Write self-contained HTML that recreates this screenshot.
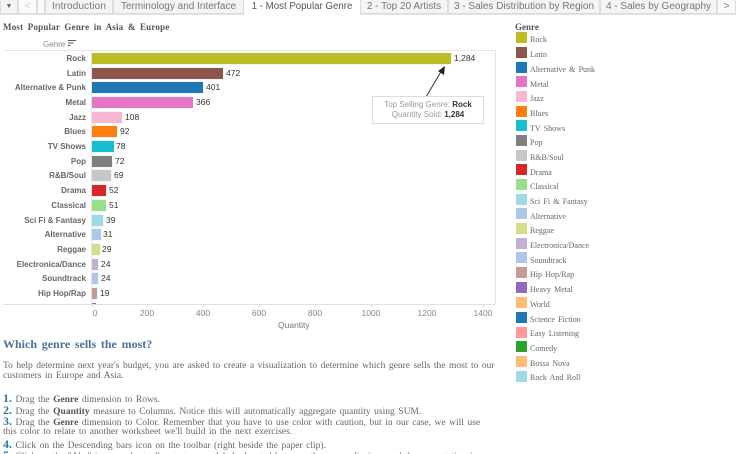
<!DOCTYPE html>
<html><head><meta charset="utf-8">
<style>
html,body{margin:0;padding:0;background:#fff;width:736px;height:454px;overflow:hidden}
body{position:relative;font-family:"Liberation Sans",sans-serif}
.a{position:absolute;white-space:nowrap}
.tab{position:absolute;top:-1px;height:15px;background:#f4f4f4;border:1px solid #dcdcdc;border-top:0;box-sizing:border-box;font-size:10px;line-height:16px;color:#777;text-align:center;white-space:nowrap}
.l{position:absolute;right:650px;font-size:8px;font-weight:bold;color:#666;line-height:11px;white-space:nowrap}
.b{position:absolute;left:92px;height:11px;box-shadow:0 0 0 .5px rgba(200,220,240,.5)}
.v{position:absolute;font-size:8.5px;color:#333;line-height:11px}
.t{position:absolute;font-size:8.5px;color:#888;line-height:11px;width:40px;text-align:center;top:308px}
.tk{position:absolute;top:304px;width:1px;height:3px;background:#ddd}
.sw{position:absolute;left:516px;width:11px;height:11px}
.lg{position:absolute;left:530px;font:8px/10px "Liberation Serif",serif;color:#666;word-spacing:1.2px;white-space:nowrap}
.p{position:absolute;left:3px;width:490px;font:9.5px/11px "Liberation Serif",serif;color:#666;white-space:nowrap;word-spacing:1.15px}
.p b{color:#555}
.n{font-weight:bold;font-size:12px;color:#2b7a9e;word-spacing:0}
</style></head><body>
<div class="a" style="left:0;top:14px;width:736px;height:1px;background:#e2e2e2"></div>
<div class="tab" style="left:0;width:18px;color:#666;font-size:7px">▼</div>
<div class="tab" style="left:18px;width:19px;background:#fafafa;color:#ccc">&lt;</div>
<div class="tab" style="left:37px;width:8px;background:#fafafa"></div>
<div class="tab" style="left:45px;width:68px;letter-spacing:.15px">Introduction</div>
<div class="tab" style="left:113px;width:131px">Terminology and Interface</div>
<div class="tab" style="left:244px;width:116px;background:#fff;color:#555;border:0;height:16px;font-size:9.7px">1 - Most Popular Genre</div>
<div class="tab" style="left:360px;width:88px">2 - Top 20 Artists</div>
<div class="tab" style="left:448px;width:152px">3 - Sales Distribution by Region</div>
<div class="tab" style="left:600px;width:117px">4 - Sales by Geography</div>
<div class="tab" style="left:717px;width:19px;background:#fafafa;color:#777">&gt;</div>

<div class="a" style="left:3px;top:22px;font:bold 9px/11px 'Liberation Serif',serif;color:#555;word-spacing:2px;letter-spacing:.2px">Most Popular Genre in Asia &amp; Europe</div>
<div class="a" style="left:43px;top:40px;font-size:8px;line-height:10px;color:#888">Genre</div>
<svg class="a" style="left:68px;top:39px" width="9" height="9"><path d="M0 1.5h8M0 4h5.5M0 6.5h2.5" stroke="#555" stroke-width="1" fill="none"/></svg>

<div class="a" style="left:3px;top:50px;width:492px;height:1px;background:#e6e6e6"></div>
<div class="a" style="left:3px;top:304px;width:492px;height:1px;background:#e0e0e0"></div>
<div class="a" style="left:91px;top:51px;width:1px;height:253px;background:#e6e6e6"></div>
<div class="a" style="left:495px;top:50px;width:1px;height:255px;background:#e6e6e6"></div>

<div class="l" style="top:53px">Rock</div><div class="b" style="top:53px;width:359px;background:#bcbd22"></div><div class="v" style="left:454px;top:53px">1,284</div>
<div class="l" style="top:68px">Latin</div><div class="b" style="top:68px;width:131px;background:#8c564b"></div><div class="v" style="left:226px;top:68px">472</div>
<div class="l" style="top:82px">Alternative &amp; Punk</div><div class="b" style="top:82px;width:111px;background:#1f77b4"></div><div class="v" style="left:206px;top:82px">401</div>
<div class="l" style="top:97px">Metal</div><div class="b" style="top:97px;width:101px;background:#e377c2"></div><div class="v" style="left:196px;top:97px">366</div>
<div class="l" style="top:112px">Jazz</div><div class="b" style="top:112px;width:30px;background:#f7b6d2"></div><div class="v" style="left:125px;top:112px">108</div>
<div class="l" style="top:126px">Blues</div><div class="b" style="top:126px;width:25px;background:#ff7f0e"></div><div class="v" style="left:120px;top:126px">92</div>
<div class="l" style="top:141px">TV Shows</div><div class="b" style="top:141px;width:22px;background:#17becf"></div><div class="v" style="left:116px;top:141px">78</div>
<div class="l" style="top:156px">Pop</div><div class="b" style="top:156px;width:20px;background:#7f7f7f"></div><div class="v" style="left:115px;top:156px">72</div>
<div class="l" style="top:170px">R&amp;B/Soul</div><div class="b" style="top:170px;width:19px;background:#c7c7c7"></div><div class="v" style="left:114px;top:170px">69</div>
<div class="l" style="top:185px">Drama</div><div class="b" style="top:185px;width:14px;background:#d62728"></div><div class="v" style="left:109px;top:185px">52</div>
<div class="l" style="top:200px">Classical</div><div class="b" style="top:200px;width:14px;background:#98df8a"></div><div class="v" style="left:109px;top:200px">51</div>
<div class="l" style="top:215px">Sci Fi &amp; Fantasy</div><div class="b" style="top:215px;width:11px;background:#9edae5"></div><div class="v" style="left:106px;top:215px">39</div>
<div class="l" style="top:229px">Alternative</div><div class="b" style="top:229px;width:9px;background:#aec7e8"></div><div class="v" style="left:103px;top:229px">31</div>
<div class="l" style="top:244px">Reggae</div><div class="b" style="top:244px;width:8px;background:#dbdb8d"></div><div class="v" style="left:102px;top:244px">29</div>
<div class="l" style="top:259px">Electronica/Dance</div><div class="b" style="top:259px;width:6px;background:#c5b0d5"></div><div class="v" style="left:101px;top:259px">24</div>
<div class="l" style="top:273px">Soundtrack</div><div class="b" style="top:273px;width:6px;background:#aec7e8"></div><div class="v" style="left:101px;top:273px">24</div>
<div class="l" style="top:288px">Hip Hop/Rap</div><div class="b" style="top:288px;width:5px;background:#c49c94"></div><div class="v" style="left:100px;top:288px">19</div>
<div class="a" style="left:92px;top:303px;width:4px;height:1px;background:#9467bd"></div>

<div class="tk" style="left:92px"></div><div class="tk" style="left:147px"></div><div class="tk" style="left:203px"></div><div class="tk" style="left:259px"></div><div class="tk" style="left:315px"></div><div class="tk" style="left:371px"></div><div class="tk" style="left:427px"></div><div class="tk" style="left:483px"></div>
<div class="t" style="left:75px">0</div><div class="t" style="left:127px">200</div><div class="t" style="left:183px">400</div><div class="t" style="left:239px">600</div><div class="t" style="left:295px">800</div><div class="t" style="left:351px">1000</div><div class="t" style="left:407px">1200</div><div class="t" style="left:463px">1400</div>
<div class="a" style="left:278px;top:320px;font-size:8.5px;line-height:11px;color:#777">Quantity</div>

<svg class="a" style="left:420px;top:60px" width="30" height="40"><path d="M6 37L22 10" stroke="#333" stroke-width="1" fill="none"/><path d="M25 6L24 15 18 11Z" fill="#222"/></svg>
<div class="a" style="left:372px;top:96px;width:112px;height:28px;box-sizing:border-box;border:1px solid #ddd;background:#fff;font-size:8px;line-height:10px;color:#999;text-align:center;padding-top:3px">Top Selling Genre: <b style="color:#333">Rock</b><br>Quantity Sold: <b style="color:#333">1,284</b></div>

<div class="a" style="left:515px;top:22px;font:bold 9px/11px 'Liberation Serif',serif;color:#555">Genre</div>
<div class="sw" style="top:32px;background:#bcbd22"></div><div class="lg" style="top:35px">Rock</div>
<div class="sw" style="top:47px;background:#8c564b"></div><div class="lg" style="top:50px">Latin</div>
<div class="sw" style="top:62px;background:#1f77b4"></div><div class="lg" style="top:65px">Alternative &amp; Punk</div>
<div class="sw" style="top:76px;background:#e377c2"></div><div class="lg" style="top:80px">Metal</div>
<div class="sw" style="top:91px;background:#f7b6d2"></div><div class="lg" style="top:94px">Jazz</div>
<div class="sw" style="top:106px;background:#ff7f0e"></div><div class="lg" style="top:109px">Blues</div>
<div class="sw" style="top:120px;background:#17becf"></div><div class="lg" style="top:124px">TV Shows</div>
<div class="sw" style="top:135px;background:#7f7f7f"></div><div class="lg" style="top:138px">Pop</div>
<div class="sw" style="top:150px;background:#c7c7c7"></div><div class="lg" style="top:153px">R&amp;B/Soul</div>
<div class="sw" style="top:164px;background:#d62728"></div><div class="lg" style="top:168px">Drama</div>
<div class="sw" style="top:179px;background:#98df8a"></div><div class="lg" style="top:182px">Classical</div>
<div class="sw" style="top:194px;background:#9edae5"></div><div class="lg" style="top:197px">Sci Fi &amp; Fantasy</div>
<div class="sw" style="top:208px;background:#aec7e8"></div><div class="lg" style="top:212px">Alternative</div>
<div class="sw" style="top:223px;background:#dbdb8d"></div><div class="lg" style="top:226px">Reggae</div>
<div class="sw" style="top:238px;background:#c5b0d5"></div><div class="lg" style="top:241px">Electronica/Dance</div>
<div class="sw" style="top:252px;background:#aec7e8"></div><div class="lg" style="top:256px">Soundtrack</div>
<div class="sw" style="top:267px;background:#c49c94"></div><div class="lg" style="top:270px">Hip Hop/Rap</div>
<div class="sw" style="top:282px;background:#9467bd"></div><div class="lg" style="top:285px">Heavy Metal</div>
<div class="sw" style="top:297px;background:#ffbb78"></div><div class="lg" style="top:300px">World</div>
<div class="sw" style="top:312px;background:#1f77b4"></div><div class="lg" style="top:315px">Science Fiction</div>
<div class="sw" style="top:327px;background:#ff9896"></div><div class="lg" style="top:329px">Easy Listening</div>
<div class="sw" style="top:341px;background:#2ca02c"></div><div class="lg" style="top:344px">Comedy</div>
<div class="sw" style="top:356px;background:#ffbb78"></div><div class="lg" style="top:359px">Bossa Nova</div>
<div class="sw" style="top:371px;background:#9edae5"></div><div class="lg" style="top:373px">Rock And Roll</div>

<div class="a" style="left:3px;top:337px;font:bold 12px/14px 'Liberation Serif',serif;color:#4e7297;word-spacing:1.7px">Which genre sells the most?</div>
<div class="p" style="top:361px">To help determine next year's budget, you are asked to create a visualization to determine which genre sells the most to our</div>
<div class="p" style="top:371px">customers in Europe and Asia.</div>
<div class="p" style="top:393px"><span class="n">1.</span> Drag the <b>Genre</b> dimension to Rows.</div>
<div class="p" style="top:405px"><span class="n">2.</span> Drag the <b>Quantity</b> measure to Columns. Notice this will automatically aggregate quantity using SUM.</div>
<div class="p" style="top:416px"><span class="n">3.</span> Drag the <b>Genre</b> dimension to Color. Remember that you have to use color with caution, but in our case, we will use</div>
<div class="p" style="top:427px">this color to relate to another worksheet we'll build in the next exercises.</div>
<div class="p" style="top:439px"><span class="n">4.</span> Click on the Descending bars icon on the toolbar (right beside the paper clip).</div>
<div class="p" style="top:450px"><span class="n">5.</span> Click on the "Abc" icon on the toolbar to turn on labels, located between the paper clip icon and the presentation icon</div>
</body></html>
